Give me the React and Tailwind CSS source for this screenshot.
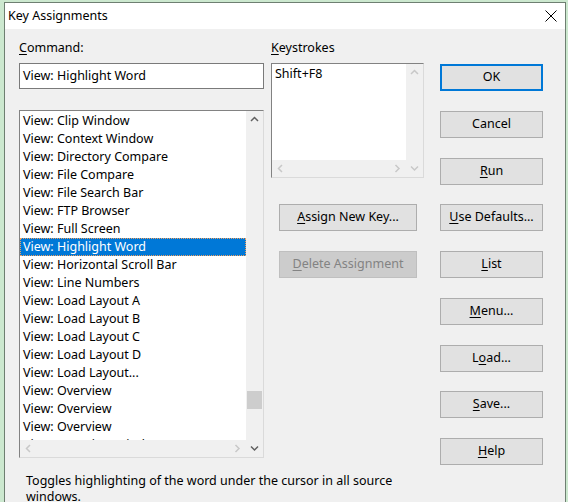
import React from 'react';

// Key Assignments dialog (Windows 10 style)

const font = { fontFamily: '"Noto Sans", "Liberation Sans", sans-serif' };

const commands = [
  'View: Clip Window',
  'View: Context Window',
  'View: Directory Compare',
  'View: File Compare',
  'View: File Search Bar',
  'View: FTP Browser',
  'View: Full Screen',
  'View: Highlight Word',
  'View: Horizontal Scroll Bar',
  'View: Line Numbers',
  'View: Load Layout A',
  'View: Load Layout B',
  'View: Load Layout C',
  'View: Load Layout D',
  'View: Load Layout...',
  'View: Overview',
  'View: Overview',
  'View: Overview',
  'View: Overview Window',
];

const Chevron = ({ dir, color = '#606060' }) => {
  const paths = {
    up: 'M1 5 L4.5 1.5 L8 5',
    down: 'M1 1.5 L4.5 5 L8 1.5',
    left: 'M5 1 L1.5 4.5 L5 8',
    right: 'M1.5 1 L5 4.5 L1.5 8',
  };
  const vertical = dir === 'up' || dir === 'down';
  return (
    <svg width={vertical ? 9 : 7} height={vertical ? 7 : 9} viewBox={vertical ? '0 0 9 7' : '0 0 7 9'}>
      <path d={paths[dir]} fill="none" stroke={color} strokeWidth="1.5" />
    </svg>
  );
};

// underline the mnemonic letter
const Label = ({ text, u }) => {
  if (u === undefined) return text;
  return (
    <>
      {text.slice(0, u)}
      <span className="underline underline-offset-2">{text[u]}</span>
      {text.slice(u + 1)}
    </>
  );
};

const Button = ({ text, u, primary, disabled, className = '' }) => (
  <div
    className={`flex items-center justify-center h-[27px] text-[12.5px] ${
      primary ? 'border-2 border-[#0078d7] bg-[#e1e1e1]' : disabled ? 'border border-[#bfbfbf] bg-[#cccccc] text-[#838383]' : 'border border-[#adadad] bg-[#e1e1e1]'
    } ${className}`}
  >
    <Label text={text} u={u} />
  </div>
);

const rightButtons = [
  { text: 'OK', primary: true },
  { text: 'Cancel' },
  { text: 'Run', u: 0 },
  { text: 'Use Defaults...', u: 0 },
  { text: 'List', u: 0 },
  { text: 'Menu...', u: 0 },
  { text: 'Load...', u: 1 },
  { text: 'Save...', u: 0 },
  { text: 'Help', u: 0 },
];

export default function App() {
  return (
    <div className="w-[568px] h-[502px] bg-[#cce8cf] overflow-hidden text-black" style={font}>
      <div className="ml-[4px] mt-[2px] w-[562px] h-[520px] border border-[#6e7f71] bg-[#f0f0f0]">
        {/* title bar */}
        <div className="h-[26px] bg-white flex items-center justify-between pl-[3px] pr-[8px]">
          <span className="text-[12.5px]">Key Assignments</span>
          <svg width="12" height="12" viewBox="0 0 12 12">
            <path d="M0.5 0.5 L11.5 11.5 M11.5 0.5 L0.5 11.5" stroke="#000" strokeWidth="1" />
          </svg>
        </div>

        <div className="pl-[14px] pt-[11px] flex">
          {/* left column */}
          <div className="w-[245px] flex flex-col">
            <div className="text-[12.5px] leading-[16px]">
              <Label text="Command:" u={0} />
            </div>
            <div className="mt-[7px] h-[26px] border border-[#7a7a7a] bg-white flex items-center pl-[3px] text-[12.5px]">
              View: Highlight Word
            </div>
            <div className="mt-[21px] h-[348px] border border-[#dadada] border-t-[#828282] border-l-[#828282] bg-white flex">
              <div className="flex-1 flex flex-col min-w-0">
                <div className="h-[330px] overflow-hidden pt-[1px]">
                  {commands.map((c, i) => (
                    <div
                      key={i}
                      className={`h-[18px] leading-[18px] pl-[3px] text-[12.5px] whitespace-nowrap ${
                        i === 7 ? 'bg-[#0078d7] text-white outline-1 outline-dotted outline-[#f0a060] -outline-offset-1' : ''
                      }`}
                    >
                      {c}
                    </div>
                  ))}
                </div>
                <div className="h-[17px] bg-[#f0f0f0] flex items-center justify-between px-[5px]">
                  <Chevron dir="left" color="#c8c8c8" />
                  <Chevron dir="right" color="#c8c8c8" />
                </div>
              </div>
              <div className="w-[17px] bg-[#f0f0f0] flex flex-col items-center">
                <div className="h-[17px] flex items-center">
                  <Chevron dir="up" />
                </div>
                <div className="h-[263px]" />
                <div className="h-[18px] w-[15px] bg-[#cdcdcd]" />
                <div className="flex-1" />
                <div className="h-[17px] flex items-center">
                  <Chevron dir="down" />
                </div>
              </div>
            </div>
          </div>

          {/* middle column */}
          <div className="ml-[7px] w-[153px] flex flex-col">
            <div className="text-[12.5px] leading-[16px]">
              <Label text="Keystrokes" u={0} />
            </div>
            <div className="mt-[7px] h-[115px] border border-[#dadada] border-t-[#828282] border-l-[#828282] bg-white flex">
              <div className="flex-1 flex flex-col">
                <div className="flex-1 pl-[3px] pt-[1px] text-[12.5px] leading-[18px]">Shift+F8</div>
                <div className="h-[17px] bg-[#f0f0f0] flex items-center justify-between px-[5px]">
                  <Chevron dir="left" color="#c8c8c8" />
                  <Chevron dir="right" color="#c8c8c8" />
                </div>
              </div>
              <div className="w-[17px] bg-[#f0f0f0] flex flex-col items-center justify-between">
                <div className="h-[17px] flex items-center">
                  <Chevron dir="up" color="#c8c8c8" />
                </div>
                <div className="h-[17px] flex items-center">
                  <Chevron dir="down" color="#c8c8c8" />
                </div>
              </div>
            </div>
            <Button text="Assign New Key..." u={0} className="mt-[26px] ml-[8px] w-[138px]" />
            <Button text="Delete Assignment" u={0} disabled className="mt-[20px] ml-[8px] w-[138px]" />
          </div>

          {/* right column */}
          <div className="ml-[16px] w-[103px] mt-[24px] flex flex-col gap-[19.75px]">
            {rightButtons.map((b) => (
              <Button key={b.text} {...b} />
            ))}
          </div>
        </div>

        <div className="pl-[21px] pt-[8px] w-[420px] text-[12.5px] leading-[16px]">
          Toggles highlighting of the word under the cursor in all source windows.
        </div>
      </div>
    </div>
  );
}
